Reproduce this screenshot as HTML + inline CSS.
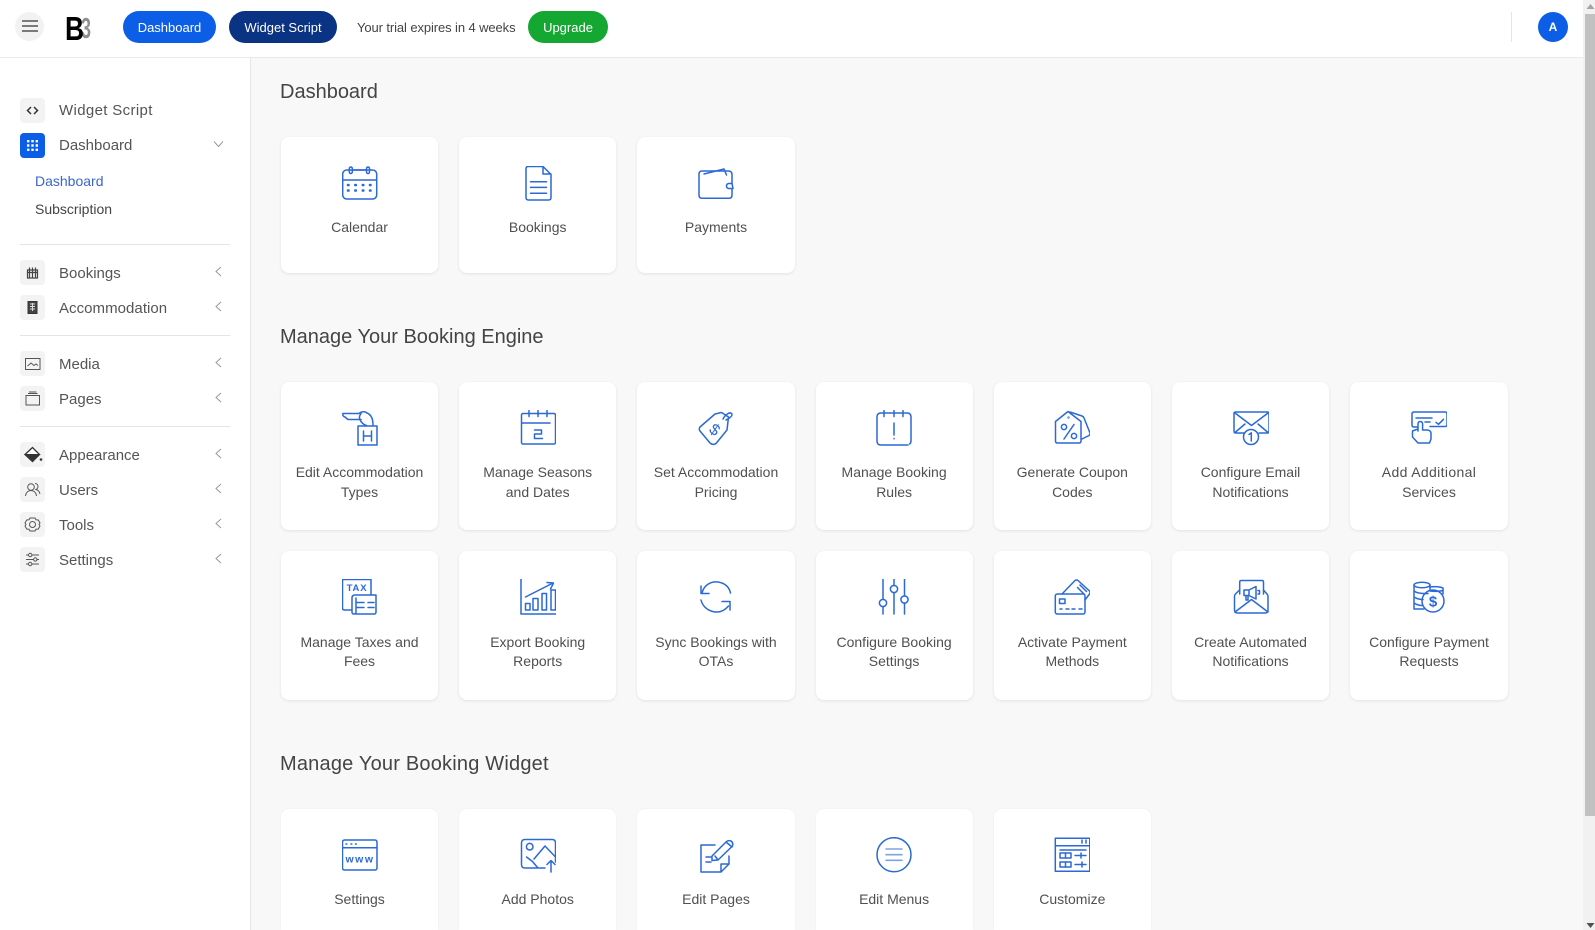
<!DOCTYPE html>
<html><head><meta charset="utf-8"><title>Dashboard</title>
<style>
html,body{margin:0;padding:0;width:1595px;height:930px;overflow:hidden;background:#f8f8f8;font-family:"Liberation Sans",sans-serif;color:#444}
div,span,svg{position:absolute;box-sizing:border-box}
span.t{position:static}
.hdr{left:0;top:0;width:1583px;height:58px;background:#fff;border-bottom:1px solid #e9e9e9}
.btn{top:11px;height:32px;border-radius:16px;color:#fff;font-size:13px;line-height:33px;text-align:center}
.side{left:0;top:58px;width:251px;height:872px;background:#fff;border-right:1px solid #e6e6e6}
.ib{left:20px;width:25px;height:25px;background:#f3f3f3;border-radius:4px}
.ib svg{left:0;top:0;fill:none;stroke:#555;stroke-width:1}
.lb{left:59px;font-size:15px;line-height:20px;color:#555;white-space:nowrap}
.sep{left:20px;width:210px;height:1px;background:#e4e4e4}
.ch{left:214px;fill:none;stroke:#999;stroke-width:1}
.h{left:280px;font-size:20px;line-height:26px;color:#444;white-space:nowrap}
.card{width:157px;background:#fff;border-radius:8px;box-shadow:0 1px 3px rgba(0,0,0,.09)}
.c1{left:281px}.c2{left:459.2px}.c3{left:637px;width:158px}.c4{left:815.6px}.c5{left:993.8px}.c6{left:1172px}.c7{left:1350px;width:158px}
.r0{top:137px;height:136px}.r1{top:382px;height:148px}.r2{top:551px;height:149px}.r3{top:809px;height:121px;box-shadow:0 0 2px rgba(0,0,0,.06);border-radius:8px 8px 0 0}
.card svg{left:60.5px;top:28px;width:36px;height:36px;fill:none;stroke:#2a69d6;stroke-width:1.5;stroke-linejoin:round;stroke-linecap:round}
.r0 svg{top:29px}
.card svg text{fill:#2a69d6;stroke:none;font-family:"Liberation Sans",sans-serif;text-anchor:middle}
.x{left:0;width:100%;top:80px;text-align:center;font-size:14px;line-height:20px;color:#505050}
.r2 .x{top:82px;line-height:19px}
</style></head><body>

<div class="hdr"></div>
<div style="left:15px;top:12px;width:29px;height:29px;border-radius:50%;background:#f2f2f2"></div>
<svg style="left:21px;top:19px" width="18" height="14" fill="none" stroke="#333" stroke-width="1.3"><path d="M1 2h16M1 7h16M1 12h16"/></svg>
<div style="left:81px;top:15px;font-size:29px;line-height:29px;font-weight:bold;color:#8f8f8f;width:16px;transform:scaleX(.62);transform-origin:0 0">3</div>
<div style="left:65px;top:12px;font-size:33px;line-height:33px;font-weight:bold;color:#000;width:24px;transform:scaleX(.8);transform-origin:0 0">B</div>
<div class="btn" style="left:123px;width:93px;background:#0d5ee6">Dashboard</div>
<div class="btn" style="left:229px;width:108px;background:#0a3483">Widget Script</div>
<div style="left:357px;top:12px;height:32px;line-height:32px;font-size:13px;color:#444;white-space:nowrap;letter-spacing:-.1px">Your trial expires in 4 weeks</div>
<div class="btn" style="left:528px;width:80px;background:#14a832">Upgrade</div>
<div style="left:1511px;top:12px;width:1px;height:30px;background:#e4e4e4"></div>
<div style="left:1538px;top:12px;width:30px;height:30px;border-radius:50%;background:#0d5ee6;color:#fff;font-size:12px;font-weight:bold;line-height:30px;text-align:center">A</div>

<!-- scrollbar -->
<div style="left:1583px;top:0;width:12px;height:930px;background:#f1f1f1"></div>
<div style="left:1585px;top:14px;width:10px;height:802px;background:#c1c1c1"></div>
<svg style="left:1586px;top:2px" width="9" height="8"><path d="M4.500 2L8.500 7H.500z" fill="#a3a3a3"/></svg>
<svg style="left:1586px;top:921px" width="9" height="8"><path d="M4.500 7L8.500 2H.500z" fill="#505050"/></svg>

<!-- sidebar -->
<div class="side"></div>
<div class="ib" style="top:98px"><svg width="25" height="25" style="stroke:#333;stroke-width:1.500"><path d="M11 9l-3.500 3.500L11 16M14 9l3.500 3.500L14 16"/></svg></div>
<div class="lb" style="top:101px;letter-spacing:.35px">Widget Script</div>
<div class="ib" style="top:133px;background:#0d5ee6"><svg width="25" height="25" style="stroke:none;fill:#fff"><path d="M7 7h2.400v2.400H7zM11.300 7h2.400v2.400h-2.400zM15.600 7H18v2.400h-2.400zM7 11.300h2.400v2.400H7zM11.300 11.300h2.400v2.400h-2.400zM15.600 11.300H18v2.400h-2.400zM7 15.600h2.400V18H7zM11.300 15.600h2.400V18h-2.400zM15.600 15.600H18V18h-2.400z"/></svg></div>
<div class="lb" style="top:136px">Dashboard</div>
<svg class="ch" style="top:140px;left:213px" width="11" height="9"><path d="M1 1.500l4.500 5 4.500-5"/></svg>
<div class="lb" style="left:35px;top:171px;font-size:14px;color:#3a66c8">Dashboard</div>
<div class="lb" style="left:35px;top:199px;font-size:14px;color:#444">Subscription</div>
<div class="sep" style="top:244px"></div>
<div class="ib" style="top:260px"><svg width="25" height="25" style="stroke:#444"><path d="M7.500 10h10v8h-10zM7.500 12.500h10M9.500 7.500v10.500M12.500 7.500v10.500M15.500 7.500v10.500" stroke-width="1.200"/></svg></div>
<div class="lb" style="top:264px">Bookings</div>
<svg class="ch" style="top:266px" width="9" height="11"><path d="M7 1L2 5.500 7 10"/></svg>
<div class="ib" style="top:295px"><svg width="25" height="25" style="stroke:#333"><path d="M8 6.500h9v12H8z" fill="#444"/><path d="M10 9h5M10 11.500h5M10 14h5M12.500 8v8" stroke="#ddd"/></svg></div>
<div class="lb" style="top:299px;letter-spacing:.05px">Accommodation</div>
<svg class="ch" style="top:301px" width="9" height="11"><path d="M7 1L2 5.500 7 10"/></svg>
<div class="sep" style="top:335px"></div>
<div class="ib" style="top:351px"><svg width="25" height="25"><path d="M5.500 7.500h14.500v11h-14.500zM7.500 15l3.500-3 3 2.500 2-1.500 2 1.500"/></svg></div>
<div class="lb" style="top:355px">Media</div>
<svg class="ch" style="top:357px" width="9" height="11"><path d="M7 1L2 5.500 7 10"/></svg>
<div class="ib" style="top:386px"><svg width="25" height="25"><path d="M6 9.500h13.500v9.500H6zM8 7.500h9.500M9 6h7.500"/></svg></div>
<div class="lb" style="top:390px">Pages</div>
<svg class="ch" style="top:392px" width="9" height="11"><path d="M7 1L2 5.500 7 10"/></svg>
<div class="sep" style="top:426px"></div>
<div class="ib" style="top:442px"><svg width="25" height="25" style="stroke:#333"><path d="M12.500 5.500L5 12.500l7.500 7 7-7z" fill="#fff" stroke-width="1.300"/><path d="M5 12.500h14.500l-7 7z" fill="#333"/><circle cx="21" cy="17.500" r="1.300" fill="#333" stroke="none"/></svg></div>
<div class="lb" style="top:446px">Appearance</div>
<svg class="ch" style="top:448px" width="9" height="11"><path d="M7 1L2 5.500 7 10"/></svg>
<div class="ib" style="top:477px"><svg width="25" height="25"><circle cx="11" cy="10" r="3.300"/><path d="M5.500 19c.5-4 3-5.500 5.500-5.500s5 1.500 5.500 5.500M15 6.500c2 0 3 1.500 3 3s-1 2.500-2 3c2 .5 3.500 2 4 4.500"/></svg></div>
<div class="lb" style="top:481px">Users</div>
<svg class="ch" style="top:483px" width="9" height="11"><path d="M7 1L2 5.500 7 10"/></svg>
<div class="ib" style="top:512px"><svg width="25" height="25"><path d="M10 6h5l1 1.800 2.300.2 1.700 3-1 1.500 1 1.500-1.700 3-2.300.2-1 1.800h-5l-1-1.800-2.300-.2-1.700-3 1-1.500-1-1.500 1.700-3 2.300-.2z"/><circle cx="12.500" cy="12.500" r="3"/></svg></div>
<div class="lb" style="top:516px">Tools</div>
<svg class="ch" style="top:518px" width="9" height="11"><path d="M7 1L2 5.500 7 10"/></svg>
<div class="ib" style="top:547px"><svg width="25" height="25"><path d="M6 8h2.500M12 8h7M6 12.500h7.500M17 12.500h2M6 17h2.500M12 17h7"/><circle cx="10.200" cy="8" r="1.700"/><circle cx="15.300" cy="12.500" r="1.700"/><circle cx="10.200" cy="17" r="1.700"/></svg></div>
<div class="lb" style="top:551px">Settings</div>
<svg class="ch" style="top:553px" width="9" height="11"><path d="M7 1L2 5.500 7 10"/></svg>

<!-- main -->
<div class="h" style="top:79px">Dashboard</div>
<div class="h" style="top:324px">Manage Your Booking Engine</div>
<div class="h" style="top:751px;letter-spacing:.2px">Manage Your Booking Widget</div>

<!-- row 0 -->
<div class="card r0 c1"><svg viewBox="0 0 36 36"><rect x=".7" y="4" width="34" height="29" rx="4"/><path d="M1 14h33.500M11 4h13"/><rect x="7.300" y="1" width="3" height="6.500" rx="1.500"/><rect x="24.500" y="1" width="3" height="6.500" rx="1.500"/><path d="M6 19h.5M13.300 19h.5M20.800 19h.5M28 19h.5M6 24.500h.5M13.300 24.500h.5M20.800 24.500h.5M28 24.500h.5" stroke-width="2.600"/></svg><div class="x">Calendar</div></div>
<div class="card r0 c2"><svg viewBox="0 0 36 36"><path d="M8 .5h15l8 8v23q0 2.500-2.500 2.500h-20q-2.500 0-2.500-2.500V3Q6 .5 8 .5zM23 .5V8h8M10.500 15.700h16M10.500 21.400h16M10.500 27.300h16"/></svg><div class="x">Bookings</div></div>
<div class="card r0 c3"><svg viewBox="0 0 36 36"><path d="M4 5h27q3 .5 3 3.500V29q0 3.300-3 3.300H4q-3 0-3-3.300V8Q1 5 4 5z"/><path d="M6 8L26 3l2.500 6"/><path d="M34 17.500h-3.500q-2 .5-2 2.500t2 2.500H35z" fill="#fff"/></svg><div class="x">Payments</div></div>

<!-- row 1 -->
<div class="card r1 c1"><svg viewBox="0 0 36 36"><rect x="16" y="16" width="19" height="19"/><path d="M21.500 21v10M29.500 21v10M21.500 26h8"/><path d="M1 3.500H17c2-2 6-2.500 8-.5 4 1.500 6 5 6 12"/><path d="M1 3.500c-.5 1.500 0 3 2 3.500l3 2.500h13"/><path d="M19 3.500c-2 2.500-2 5.500 0 8 1.500 2 3 3.500 5.500 4"/></svg><div class="x">Edit Accommodation<br>Types</div></div>
<div class="card r1 c2"><svg viewBox="0 0 36 36"><rect x="1.500" y="3.500" width="34" height="30.500" rx="1.500"/><path d="M2 13h28M9 .5v6M18 .5v6M27 .5v6M14.500 20h7v4h-7v4.500h8"/></svg><div class="x">Manage Seasons<br>and Dates</div></div>
<div class="card r1 c3"><svg viewBox="0 0 36 36"><path d="M17 4L2 17q-1.500 2 0 4l10 12q3 2.500 6 .5L29 20 30.500 7l-7-4.500z"/><path d="M25 9c2-4 7-8 9-5 .5 3-4 5-6 6"/><text x="16.500" y="25" font-size="16" transform="rotate(35 16.500 20)">$</text></svg><div class="x">Set Accommodation<br>Pricing</div></div>
<div class="card r1 c4"><svg viewBox="0 0 36 36"><path d="M32 35H5q-4 0-4-4V7q0-4 4-4h26q4 0 4 4v24q0 2-1.500 3"/><path d="M8 .5v6M18 .5v6M27 .5v6M18 13v12"/><path d="M18 28.500v.3"/></svg><div class="x">Manage Booking<br>Rules</div></div>
<div class="card r1 c5"><svg viewBox="0 0 36 36"><path d="M14 1.500L1.500 11.500V31q0 2 2 2H25q2 0 2-2V11.500z"/><path d="M16 2l12 4q1.500.5 2 2l6 15q.5 1.500-1 2.500L28 29"/><circle cx="14.500" cy="7.500" r=".4"/><circle cx="10" cy="17" r="2.600"/><circle cx="20" cy="26" r="2.600"/><path d="M20 14.500L10 29"/></svg><div class="x">Generate Coupon<br>Codes</div></div>
<div class="card r1 c6"><svg viewBox="0 0 36 36"><path d="M11 23H2.500Q1 23 1 21V3.500Q1 2 2.500 2h32Q36 2 36 3.500V21q0 2-1.500 2H26"/><path d="M2 3l16.500 12.500L35 3M2 22.500L12 14M35 22.500L25 14"/><circle cx="18" cy="27" r="7.500"/><path d="M16 24.500l2.300-1.700V31"/></svg><div class="x">Configure Email<br>Notifications</div></div>
<div class="card r1 c7"><svg viewBox="0 0 36 36"><path d="M6 17H3q-2 0-2-2V4q0-2 2-2h31q2 0 2 2v10.500q0 2-2 2H19"/><path d="M5 8h16M14 12h5M25 12.300l2.500 2 5-5"/><path d="M7 21v-7q0-2.500 2.300-2.500t2.300 2.500v6h5q3 .5 3.400 3v6l-1.500 4H7l-5.500-6v-6l5.500-2"/></svg><div class="x"><span class="t" style="letter-spacing:.35px">Add Additional</span><br>Services</div></div>

<!-- row 2 -->
<div class="card r2 c1"><svg viewBox="0 0 36 36"><path d="M9 31H2.500Q.5 31 .5 29V.5H29v15.500"/><text x="15" y="12" font-size="9.500" font-weight="bold" letter-spacing=".8">TAX</text><path d="M14 35h18q2 0 2-2V16H13q-3 0-3 3v14q0 2 2 2 2 0 2-2V19"/><path d="M15 23.500h7M26 23.500h6M15 28.500h7M26 28.500h6"/></svg><div class="x">Manage Taxes and<br>Fees</div></div>
<div class="card r2 c2"><svg viewBox="0 0 36 36"><path d="M1 0v35h35M5.500 18L33 4M27 3.500l6.500.5-3 6"/><rect x="5.500" y="24.500" width="4.500" height="6.500"/><rect x="13" y="19.500" width="5" height="11.500"/><rect x="22" y="14.500" width="4.500" height="16.500"/><rect x="31" y="11" width="4.500" height="20"/></svg><div class="x">Export Booking<br>Reports</div></div>
<div class="card r2 c3"><svg viewBox="0 0 36 36"><path d="M4 14C6 6 13 2 20 3c6 1 11 4 12.500 11M3 21c2 8 9 12 16 12 5 0 9-3 11.500-6"/><path d="M3 7v7.500h8M32 31v-8.500H24"/></svg><div class="x">Sync Bookings with<br>OTAs</div></div>
<div class="card r2 c4"><svg viewBox="0 0 36 36"><path d="M7 0v20.500M7 27.500V35M18 0v6.500M18 13.500V35M28.500 0v17M28.500 24v11"/><circle cx="7" cy="24" r="3.600"/><circle cx="18" cy="10" r="3.600"/><circle cx="28.500" cy="20.500" r="3.600"/></svg><div class="x">Configure Booking<br>Settings</div></div>
<div class="card r2 c5"><svg viewBox="0 0 36 36"><rect x="1.300" y="15" width="29.700" height="20" rx="2"/><path d="M8 15L21 1.500q1.500-1 3 0L35.500 12q1 1.500 0 3L31 21M26 6l6.500 6.500M23.500 8.500L30 15"/><rect x="5.500" y="20" width="5.500" height="4.500"/><path d="M6 30h2M12 30h3M18 30h3M25 30h3"/></svg><div class="x">Activate Payment<br>Methods</div></div>
<div class="card r2 c6"><svg viewBox="0 0 36 36"><path d="M6.700 15V3q0-1.500 1.500-1.500H29q1.500 0 1.500 1.500V15"/><path d="M6.500 11L2.500 15q-1 1-1 2v14q0 3 3 3H32q3 0 3-3V17q0-1-1-2l-3.500-4"/><path d="M2 33l16.500-12.500L35 33"/><path d="M11 11h5l7-3.500v12.500l-7-3.500h-5zM16 11v5.500M13 17v4h2v-3.500M25 11.500h1.500v3.500H25"/></svg><div class="x">Create Automated<br>Notifications</div></div>
<div class="card r2 c7"><svg viewBox="0 0 36 36"><ellipse cx="11" cy="6" rx="8" ry="2.700"/><path d="M3 6v24h10M19 6v5M3 12q4 3 14 2.500M3 18q4 2.500 9 2.500M3 24q4 2.500 8 2.500"/><path d="M19 8q8-1 13 1v6M19 12q7 1 13-.5"/><circle cx="22" cy="22" r="11"/><text x="22" y="27.500" font-size="15" font-weight="bold">$</text></svg><div class="x">Configure Payment<br>Requests</div></div>

<!-- row 3 -->
<div class="card r3 c1"><svg viewBox="0 0 36 36"><rect x=".5" y="3" width="34.500" height="30" rx="2"/><path d="M1 10.700h34M4 7h.8M9 7h.8M13.500 7h.8"/><text x="18" y="25.500" font-size="10.500" font-weight="bold" letter-spacing="1.500">www</text></svg><div class="x">Settings</div></div>
<div class="card r3 c2"><svg viewBox="0 0 36 36"><path d="M25 31H5q-3.500 0-3.500-3.500V6Q1.500 2.500 5 2.500h27Q35.500 2.500 35.500 6v19"/><circle cx="9.700" cy="9.700" r="3.300"/><path d="M6.500 20l6 4.500 5 6M14 22l11-13 10.500 11"/><path d="M31 35V24M27 27.500l4-4 4 4"/></svg><div class="x">Add Photos</div></div>
<div class="card r3 c3"><svg viewBox="0 0 36 36"><path d="M17 8H3v27h20l8-8V19M31 27h-8v8"/><path d="M14 19L28 5q2-2 5-1 2.500 1.500 1.500 5L20 23l-6 .5zM28 5l6 5M17 19l3 4"/><path d="M8 20h5M8 25h5"/></svg><div class="x">Edit Pages</div></div>
<div class="card r3 c4"><svg viewBox="0 0 36 36"><circle cx="18" cy="17.700" r="17"/><path d="M10 12h16M10 17.700h16M10 23.300h16" stroke="#7fa3e6" stroke-width="1.600"/></svg><div class="x">Edit Menus</div></div>
<div class="card r3 c5"><svg viewBox="0 0 36 36"><rect x="1.300" y="1.300" width="34.500" height="33"/><path d="M1.500 8.700h34M28 3v3M32 3v3M6 13h26"/><rect x="6" y="16" width="11" height="5"/><rect x="6" y="25" width="11" height="5"/><path d="M11.500 16v5M11.500 25v5M21 18.500h11M27 16v5M21 27.500h11M28 25v5"/></svg><div class="x">Customize</div></div>

</body></html>
